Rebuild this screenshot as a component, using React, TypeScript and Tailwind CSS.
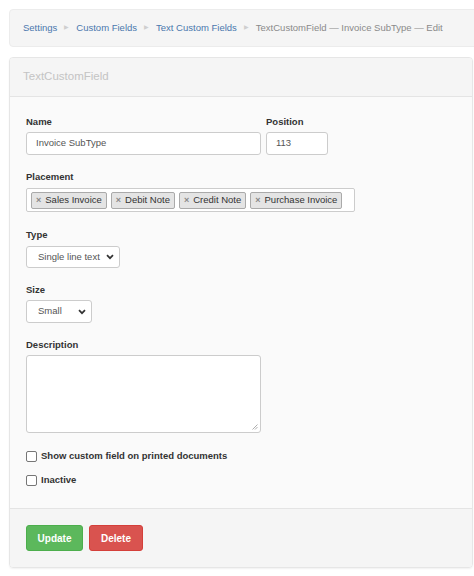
import React from "react";

const Sep = () => (
  <span className="text-[#cfcfcf] text-[6px] mx-[7px] relative top-[-1px]">▶</span>
);

const Tag = ({ label }: { label: string }) => (
  <span className="flex items-center h-[17px] px-[4px] bg-[#e4e4e4] border border-[#aaaaaa] rounded-[2px] text-[#333] text-[9.5px] leading-none">
    <span className="text-[#888] text-[9px] font-bold mr-[4px]">×</span>
    {label}
  </span>
);

const Chevron = () => (
  <svg width="8" height="6" viewBox="0 0 8 6" className="ml-auto">
    <path d="M1 1.2 L4 4.2 L7 1.2" fill="none" stroke="#333" strokeWidth="1.7" />
  </svg>
);

export default function App() {
  return (
    <div
      className="w-[474px] h-[576px] bg-white overflow-hidden text-[9.5px] text-[#333]"
      style={{ fontFamily: '"Liberation Sans", Arial, sans-serif' }}
    >
      <div className="pl-[9px] pt-[9px]">
        {/* Breadcrumb */}
        <div className="h-[38px] w-[470px] bg-[#f5f5f5] border border-[#ececec] rounded-[4px] flex items-center pl-[13px] text-[9.5px]">
          <span className="text-[#4a77ad]">Settings</span>
          <Sep />
          <span className="text-[#4a77ad]">Custom Fields</span>
          <Sep />
          <span className="text-[#4a77ad]">Text Custom Fields</span>
          <Sep />
          <span className="text-[#8a8a8a]">TextCustomField — Invoice SubType — Edit</span>
        </div>

        {/* Panel */}
        <div className="mt-[10px] w-[464px] border border-[#e6e6e6] rounded-[4px] shadow-[0_1px_2px_rgba(0,0,0,0.06)] overflow-hidden">
          <div className="h-[39px] bg-[#f5f5f5] border-b border-[#e4e4e4] flex items-center pl-[13px]">
            <span className="text-[#c4c4c4] text-[11.5px]">TextCustomField</span>
          </div>

          <div className="bg-[#fafafa] pl-[16px] pt-[18px] h-[411px]">
            <div className="flex gap-[5px]">
              <div className="flex flex-col">
                <label className="font-bold leading-[13px] mb-[4px]">Name</label>
                <div className="w-[235px] h-[23px] bg-white border border-[#cccccc] rounded-[3px] flex items-center pl-[9px] text-[#555]">
                  Invoice SubType
                </div>
              </div>
              <div className="flex flex-col">
                <label className="font-bold leading-[13px] mb-[4px]">Position</label>
                <div className="w-[62px] h-[23px] bg-white border border-[#cccccc] rounded-[3px] flex items-center pl-[9px] text-[#555]">
                  113
                </div>
              </div>
            </div>

            <label className="block font-bold leading-[13px] mt-[15px] mb-[5px]">Placement</label>
            <div className="w-[329px] h-[24px] bg-white border border-[#cccccc] rounded-[2px] flex items-center pl-[4px] gap-[4px]">
              <Tag label="Sales Invoice" />
              <Tag label="Debit Note" />
              <Tag label="Credit Note" />
              <Tag label="Purchase Invoice" />
            </div>

            <label className="block font-bold leading-[13px] mt-[16px] mb-[5px]">Type</label>
            <div className="w-[94px] h-[22px] bg-white border border-[#cccccc] rounded-[3px] flex items-center pl-[11px] pr-[5px] text-[#555]">
              Single line text
              <Chevron />
            </div>

            <label className="block font-bold leading-[13px] mt-[15px] mb-[4px]">Size</label>
            <div className="w-[66px] h-[23px] bg-white border border-[#cccccc] rounded-[3px] flex items-center pl-[11px] pr-[5px] text-[#555]">
              Small
              <Chevron />
            </div>

            <label className="block font-bold leading-[13px] mt-[15px] mb-[4px]">Description</label>
            <div className="relative w-[235px] h-[78px] bg-white border border-[#cccccc] rounded-[3px]">
              <svg width="6" height="6" viewBox="0 0 6 6" className="absolute right-[2px] bottom-[2px]">
                <path d="M0.5 5.5 L5.5 0.5 M3 5.5 L5.5 3" stroke="#999" strokeWidth="0.8" />
              </svg>
            </div>

            <div className="flex items-center mt-[17px] h-[13px]">
              <span className="w-[11px] h-[11px] border border-[#767676] rounded-[2px] bg-white mr-[4px]" />
              <span className="font-bold">Show custom field on printed documents</span>
            </div>
            <div className="flex items-center mt-[11px] h-[13px]">
              <span className="w-[11px] h-[11px] border border-[#767676] rounded-[2px] bg-white mr-[4px]" />
              <span className="font-bold">Inactive</span>
            </div>
          </div>

          <div className="bg-[#f5f5f5] border-t border-[#e4e4e4] h-[59px] pl-[16px] pt-[16px] flex gap-[6px]">
            <div className="w-[57px] h-[26px] bg-[#5cb85c] border border-[#4cae4c] rounded-[3px] flex items-center justify-center text-white font-bold text-[10px]">
              Update
            </div>
            <div className="w-[54px] h-[26px] bg-[#d9534f] border border-[#d43f3a] rounded-[3px] flex items-center justify-center text-white font-bold text-[10px]">
              Delete
            </div>
          </div>
        </div>
      </div>
    </div>
  );
}
